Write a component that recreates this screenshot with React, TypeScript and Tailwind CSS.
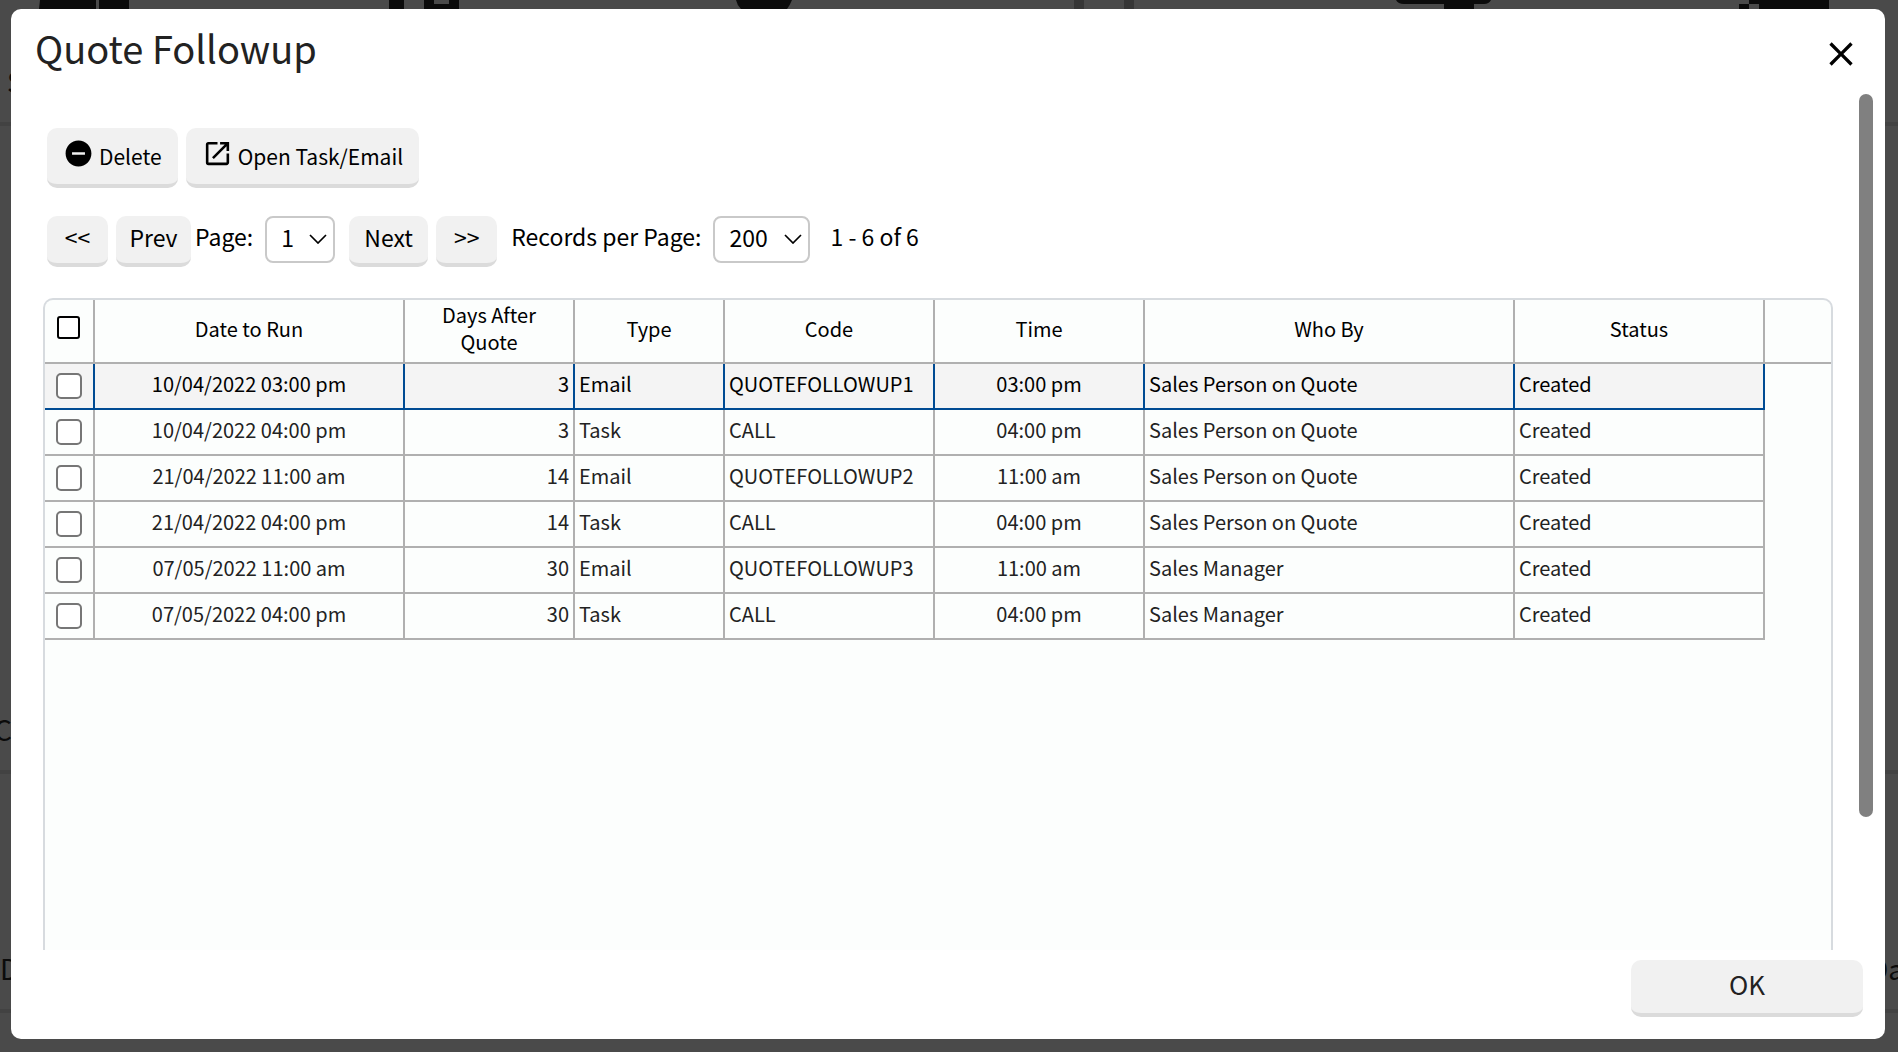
import { useState } from 'react';
import type { ReactNode } from 'react';
import { MdClose, MdOpenInNew, MdRemoveCircle } from 'react-icons/md';

type Followup = {
  date: string;
  days: number;
  type: string;
  code: string;
  time: string;
  who: string;
  status: string;
};

const followups: Followup[] = [
  { date: '10/04/2022 03:00 pm', days: 3, type: 'Email', code: 'QUOTEFOLLOWUP1', time: '03:00 pm', who: 'Sales Person on Quote', status: 'Created' },
  { date: '10/04/2022 04:00 pm', days: 3, type: 'Task', code: 'CALL', time: '04:00 pm', who: 'Sales Person on Quote', status: 'Created' },
  { date: '21/04/2022 11:00 am', days: 14, type: 'Email', code: 'QUOTEFOLLOWUP2', time: '11:00 am', who: 'Sales Person on Quote', status: 'Created' },
  { date: '21/04/2022 04:00 pm', days: 14, type: 'Task', code: 'CALL', time: '04:00 pm', who: 'Sales Person on Quote', status: 'Created' },
  { date: '07/05/2022 11:00 am', days: 30, type: 'Email', code: 'QUOTEFOLLOWUP3', time: '11:00 am', who: 'Sales Manager', status: 'Created' },
  { date: '07/05/2022 04:00 pm', days: 30, type: 'Task', code: 'CALL', time: '04:00 pm', who: 'Sales Manager', status: 'Created' },
];

const columns = [
  { label: 'Date to Run', width: 'w-[310px]' },
  { label: 'Days After Quote', width: 'w-[170px]' },
  { label: 'Type', width: 'w-[150px]' },
  { label: 'Code', width: 'w-[210px]' },
  { label: 'Time', width: 'w-[210px]' },
  { label: 'Who By', width: 'w-[370px]' },
  { label: 'Status', width: 'w-[250px]' },
];

function GreyButton({ className, children }: { className: string; children: ReactNode }) {
  return (
    <button
      type="button"
      className={`flex items-center rounded-[10px] border-b-4 border-[#dbdbdb] bg-[#f1f1f1] ${className}`}
    >
      {children}
    </button>
  );
}

function PageSelect({ id, value, options, className }: { id: string; value: string; options: string[]; className: string }) {
  return (
    <div className={`relative h-[47px] ${className}`}>
      <select
        id={id}
        defaultValue={value}
        className="h-full w-full appearance-none rounded-lg border-2 border-[#c9c9c9] bg-white pb-[6px] pl-[14px] text-[23px] leading-[30px]"
      >
        {options.map((option) => (
          <option key={option}>{option}</option>
        ))}
      </select>
      <svg viewBox="0 0 18 10" className="pointer-events-none absolute right-2 top-[18px] h-[10px] w-[18px]" fill="none" stroke="#000" strokeWidth="1.7" aria-hidden>
        <path d="M1 1l8 8 8-8" />
      </svg>
    </div>
  );
}

// The dimmed page that stays visible round the edges of the dialog
function Backdrop() {
  return (
    <div className="absolute inset-0 overflow-hidden bg-[#4a4a4a] text-[28px] leading-8 text-[#0b0b0b]" aria-hidden>
      <svg className="absolute left-0 top-0 h-[9px] w-[1898px]" fill="#0b0b0b">
        <path d="M40 0h56v9H39zM99 0h30v9H99zM389 0h15v9h-15z" />
        <path d="M424 0h10v4h15V0h10v9h-35z" />
        <path d="M736 0h56q-2 5-5 9h-46q-4-4-5-9z" />
        <path d="M1074 0h10v9h-10zM1124 0h10v9h-10z" fill="#363636" />
        <path d="M1396 0h95q-2 4-7 4h-10v5h-30V4h-40q-6 0-8-4z" />
        <path d="M1749 0h80v9h-70V4h-10v5h-10V4h10z" />
      </svg>
      <div className="absolute inset-x-0 top-[122px] h-1 bg-[#424242]" />
      <div className="absolute inset-x-0 top-[770px] h-1 bg-[#424242]" />
      <div className="absolute inset-x-0 top-[1009px] h-1 bg-[#424242]" />
      <span className="absolute left-[7px] top-[65px]">S</span>
      <span className="absolute -left-[6px] top-[713px]">C</span>
      <span className="absolute left-0 top-[952px]">D</span>
      <span className="absolute -right-[6px] top-[952px]">Da</span>
    </div>
  );
}

export default function App() {
  const [checked, setChecked] = useState<number[]>([]);
  const [activeRow, setActiveRow] = useState(0);

  const toggle = (index: number) =>
    setChecked((prev) => (prev.includes(index) ? prev.filter((i) => i !== index) : [...prev, index]));

  const toggleAll = () =>
    setChecked((prev) => (prev.length === followups.length ? [] : followups.map((_, i) => i)));

  return (
    <div className="relative h-screen overflow-hidden pb-[13px] pl-[11px] pr-[13px] pt-[9px] font-['Noto_Sans_CJK_JP','Noto_Sans',sans-serif] text-black">
      <Backdrop />

      <div role="dialog" aria-labelledby="dialog-title" className="relative flex h-full flex-col rounded-[10px] bg-white">
        <header className="flex h-[85px] shrink-0 items-start justify-between px-6 pt-[15px]">
          <h1 id="dialog-title" className="text-[38px] leading-[48px] text-[#222]">Quote Followup</h1>
          <button type="button" aria-label="Close" className="mt-[10px] text-[40px]">
            <MdClose />
          </button>
        </header>

        <div className="flex min-h-0 flex-1 justify-between overflow-hidden pr-3">
          <div className="flex min-w-0 flex-1 flex-col pl-8 pr-[26px] pt-[34px]">
            <div className="flex gap-2 pl-1 text-[21px] leading-[30px]">
              <GreyButton className="h-[60px] gap-[5px] px-4">
                <MdRemoveCircle className="mb-[6px] size-[31px]" />
                Delete
              </GreyButton>
              <GreyButton className="h-[60px] gap-[5px] px-4">
                <MdOpenInNew className="mb-[6px] size-[31px]" />
                Open Task/Email
              </GreyButton>
            </div>

            <div className="mt-7 flex items-start pl-1 text-[23px] leading-[30px]">
              <GreyButton className="h-[51px] w-[61px] justify-center pb-[6px]">&lt;&lt;</GreyButton>
              <GreyButton className="ml-2 h-[51px] w-[75px] justify-center pb-[6px]">Prev</GreyButton>
              <label htmlFor="page" className="ml-1 mt-[5px]">Page:</label>
              <PageSelect id="page" value="1" options={['1']} className="ml-3 w-[70px]" />
              <GreyButton className="ml-[14px] h-[51px] w-[79px] justify-center pb-[6px]">Next</GreyButton>
              <GreyButton className="ml-2 h-[51px] w-[61px] justify-center pb-[6px]">&gt;&gt;</GreyButton>
              <label htmlFor="per-page" className="ml-[14px] mt-[5px]">Records per Page:</label>
              <PageSelect id="per-page" value="200" options={['50', '100', '200']} className="ml-3 w-[97px]" />
              <span className="ml-5 mt-[5px]">1 - 6 of 6</span>
            </div>

            <div className="mt-[31px] min-h-0 flex-1 overflow-hidden rounded-t-[10px] border-2 border-b-0 border-[#d7dbdf] bg-[#fcfefd]">
              <table className="w-full table-fixed border-separate border-spacing-0 text-[20px] leading-[27px]">
                <thead>
                  <tr className="h-16">
                    <th className="w-[50px] border-b-2 border-r-2 border-[#b0b0b0] p-0 pb-2 pl-3 text-left align-middle">
                      <input
                        type="checkbox"
                        aria-label="Select all"
                        checked={checked.length === followups.length}
                        onChange={toggleAll}
                        className="block size-[23px] appearance-none rounded-[3px] border-2 border-black bg-white checked:bg-black"
                      />
                    </th>
                    {columns.map((column) => (
                      <th key={column.label} className={`border-b-2 border-r-2 border-[#b0b0b0] px-8 py-0 pb-[6px] text-center font-normal ${column.width}`}>
                        {column.label}
                      </th>
                    ))}
                    <th className="border-b-2 border-[#b0b0b0] p-0" />
                  </tr>
                </thead>
                <tbody>
                  {followups.map((row, index) => {
                    const active = index === activeRow;
                    const tone = active ? 'border-[#004b93] bg-[#f4f4f4] text-black' : 'border-[#b0b0b0]';
                    const cell = `border-b-2 border-r-2 px-1 py-0 pb-[6px] ${tone}`;
                    return (
                      <tr key={row.date} onClick={() => setActiveRow(index)} className="h-[46px] text-[#222]">
                        <td className={`border-b-2 border-r-2 p-0 pl-[11px] ${tone}`}>
                          <input
                            type="checkbox"
                            aria-label={`Select ${row.date}`}
                            checked={checked.includes(index)}
                            onChange={() => toggle(index)}
                            className="block size-[26px] appearance-none rounded-[5px] border-2 border-[#767676] bg-white checked:bg-[#004b93]"
                          />
                        </td>
                        <td className={`${cell} text-center`}>{row.date}</td>
                        <td className={`${cell} text-right`}>{row.days}</td>
                        <td className={cell}>{row.type}</td>
                        <td className={cell}>{row.code}</td>
                        <td className={`${cell} text-center`}>{row.time}</td>
                        <td className={cell}>{row.who}</td>
                        <td className={cell}>{row.status}</td>
                        <td className="p-0" />
                      </tr>
                    );
                  })}
                </tbody>
              </table>
            </div>
          </div>

          <div className="w-[14px] shrink-0">
            <div className="h-[calc(100%-133px)] rounded-full bg-[#808080]" />
          </div>
        </div>

        <footer className="flex h-[89px] shrink-0 items-start justify-end pr-[22px] pt-[10px]">
          <GreyButton className="h-[57px] w-[232px] justify-center pb-[6px] text-[26px] leading-[32px] text-[#222]">OK</GreyButton>
        </footer>
      </div>
    </div>
  );
}
